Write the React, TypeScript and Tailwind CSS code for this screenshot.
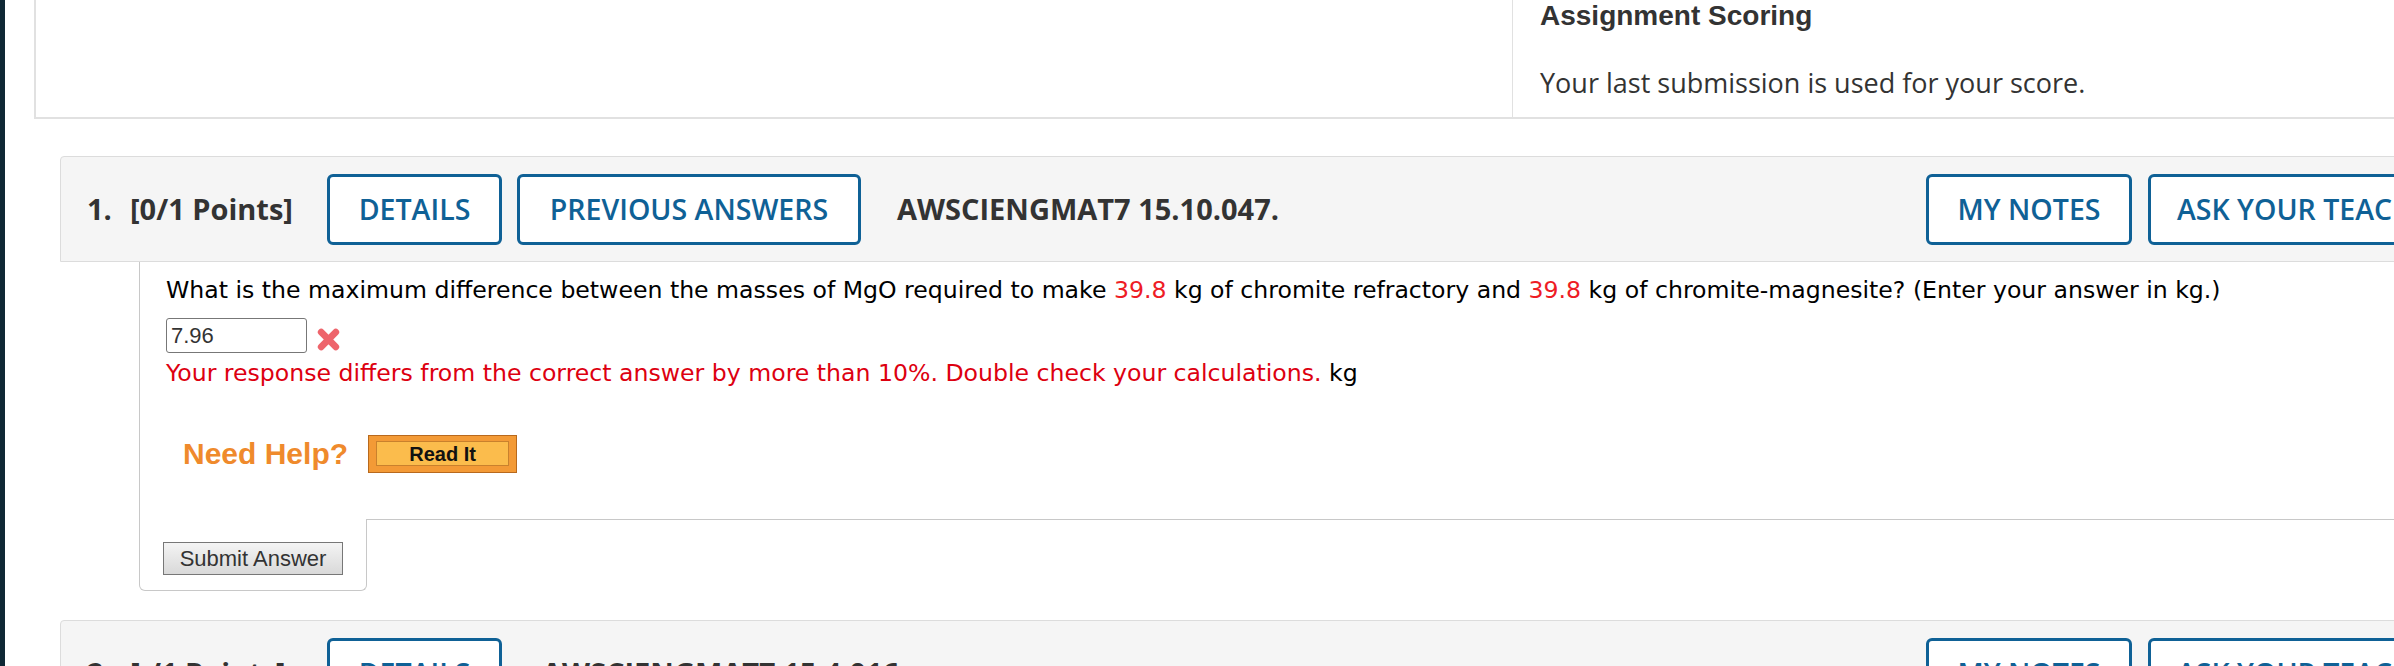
import React from 'react';

type HeaderProps = {
  num: string;
  points: string;
  code: string;
  showPrev?: boolean;
  className?: string;
};

const HeaderBtn = ({ label, className }: { label: string; className: string }) => (
  <button
    className={`flex h-[71px] shrink-0 items-center rounded-[6px] border-[3px] border-[#0f6196] bg-white font-['Open_Sans',sans-serif] text-[28.5px] font-semibold text-[#0f6196] ${className}`}>
    {label}
  </button>
);

const QuestionHeader: React.FC<HeaderProps> = ({ num, points, code, showPrev, className }) => (
  <div
    className={`ml-[55px] flex h-[106px] w-[2479px] shrink-0 items-center rounded-tl-[4px] border border-[#dcdcdc] bg-[#f5f5f5] pl-[26px] font-['Open_Sans',sans-serif] text-[#333] ${className ?? ''}`}>
    <div className="flex w-[240px] shrink-0 items-baseline text-[29px] font-bold">
      <span className="w-[43px]">{num}</span>
      <span>{points}</span>
    </div>
    <HeaderBtn label="DETAILS" className="w-[175px] justify-center" />
    {showPrev && <HeaderBtn label="PREVIOUS ANSWERS" className="ml-[15px] w-[344px] justify-center" />}
    <div className={`min-w-0 flex-1 whitespace-nowrap text-[29px] font-bold ${showPrev ? 'pl-[36px]' : 'pl-[40px]'}`}>
      {code}
    </div>
    <HeaderBtn label="MY NOTES" className="w-[206px] justify-center" />
    <HeaderBtn label="ASK YOUR TEACHER" className="ml-[16px] w-[390px] justify-start pl-[26px]" />
  </div>
);

const RedX = () => (
  <svg viewBox="0 0 24 24" className="ml-[9px] mt-[9px] h-[25px] w-[25px] shrink-0 blur-[0.4px]">
    <path d="M5 5 L19 19 M19 5 L5 19" stroke="#ee646b" strokeWidth={6.5} strokeLinecap="round" fill="none" />
  </svg>
);

const ReadIt = () => (
  <div className="ml-[20px] flex h-[38px] w-[149px] shrink-0 border border-[#b8691d] bg-[#f39a36] px-[7px] pb-[6px] pt-[5px]">
    <div className="flex h-full w-full items-center justify-center border border-[#c9812d] bg-[#fbbc4c] font-['Liberation_Sans',sans-serif] text-[20px] font-bold leading-none text-[#111]">
      Read It
    </div>
  </div>
);

export default function App() {
  return (
    <div className="flex h-[666px] w-[2394px] overflow-hidden bg-white">
      <div className="w-[5px] shrink-0 bg-[#0f2835]" />
      <div className="flex min-w-0 flex-1 flex-col overflow-hidden">
        {/* assignment card */}
        <div className="ml-[29px] flex h-[119px] shrink-0 border-b-2 border-l-2 border-[#e1e1e1]">
          <div className="w-[1477px] shrink-0 border-r border-[#e1e1e1]" />
          <div className="flex-1 pl-[27px]">
            <div className="font-['Liberation_Sans',sans-serif] text-[28px] font-bold leading-[32px] text-[#333]">
              Assignment Scoring
            </div>
            <div className="mt-[32px] font-['Open_Sans',sans-serif] text-[27px] leading-[37px] text-[#333]">
              Your last submission is used for your score.
            </div>
          </div>
        </div>

        <QuestionHeader num="1." points="[0/1 Points]" code="AWSCIENGMAT7 15.10.047." showPrev className="mt-[37px]" />

        {/* question body */}
        <div className="ml-[134px] flex shrink-0 flex-col">
          <div className="h-[257px] border-l border-[#c8c8c8] pl-[26px] pt-[15px] font-['DejaVu_Sans',Verdana,sans-serif] text-[23.6px] leading-[26px] text-black">
            <p className="whitespace-nowrap">
              What is the maximum difference between the masses of MgO required to make{' '}
              <span className="text-[#ee1c25]">39.8</span> kg of chromite refractory and{' '}
              <span className="text-[#ee1c25]">39.8</span> kg of chromite-magnesite? (Enter your answer in kg.)
            </p>
            <div className="mt-[15px] flex items-start">
              <div className="h-[35px] w-[141px] rounded-[3px] border border-[#777] pl-[4px] font-['Liberation_Sans',sans-serif] text-[22px] leading-[33px] text-[#333]">
                7.96
              </div>
              <RedX />
            </div>
            <p className="mt-[7px] whitespace-nowrap">
              <span className="text-[#dd0010]">
                Your response differs from the correct answer by more than 10%. Double check your calculations.
              </span>{' '}
              kg
            </p>
            <div className="mt-[49px] flex items-center pl-[17px]">
              <span className="font-['Liberation_Sans',sans-serif] text-[30px] font-bold leading-[34px] text-[#ef8a2c]">
                Need Help?
              </span>
              <ReadIt />
            </div>
          </div>
          <div className="flex">
            <div className="h-[72px] w-[228px] shrink-0 rounded-b-[6px] border-x border-b border-[#c8c8c8] pl-[23px] pt-[23px]">
              <button className="h-[33px] w-[180px] border border-[#777] bg-gradient-to-b from-[#f4f4f4] to-[#d9d9d9] font-['Liberation_Sans',sans-serif] text-[22px] leading-none text-[#333]">
                Submit Answer
              </button>
            </div>
            <div className="flex-1 border-t border-[#c8c8c8]" />
          </div>
        </div>

        <QuestionHeader num="2." points="[-/1 Points]" code="AWSCIENGMAT7 15.4.016." className="mt-[29px]" />
      </div>
    </div>
  );
}
